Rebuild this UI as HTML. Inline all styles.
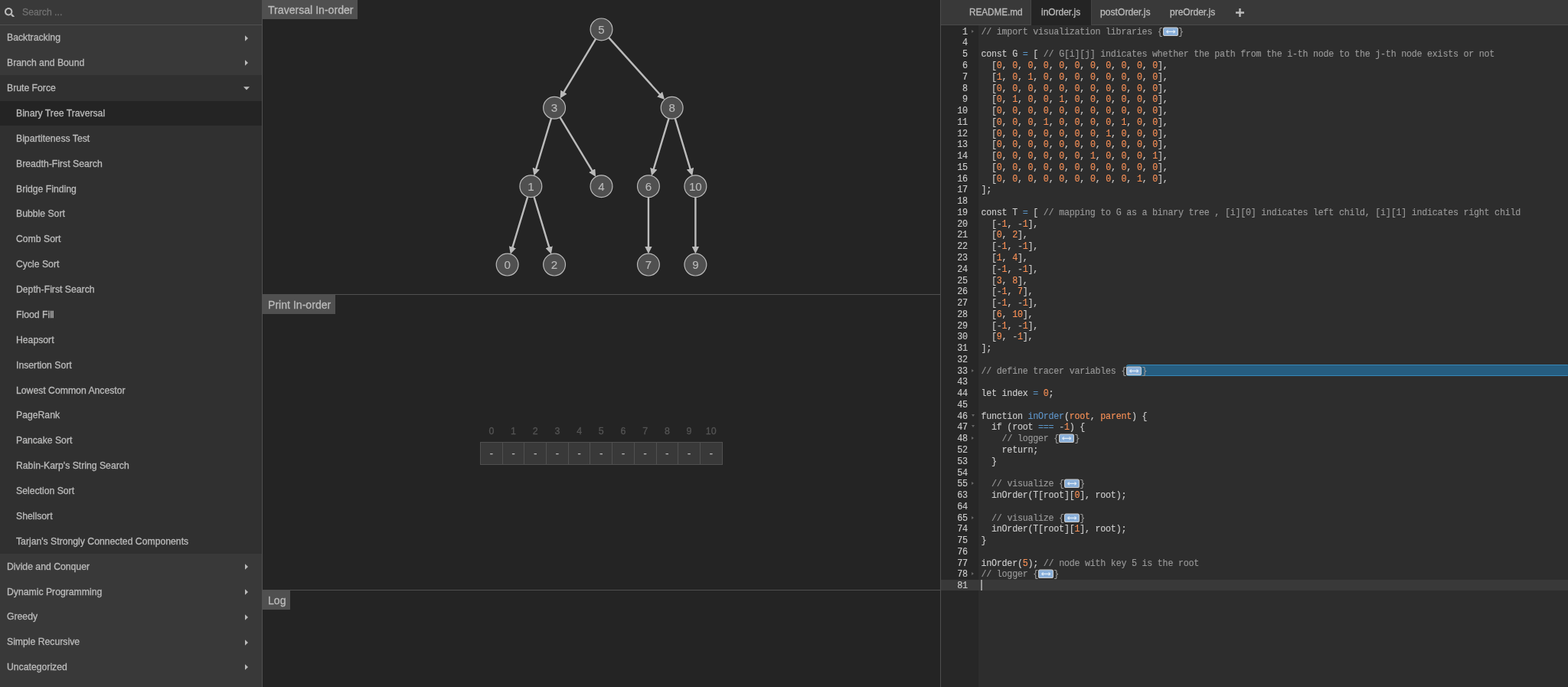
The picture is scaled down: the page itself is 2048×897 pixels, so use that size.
<!DOCTYPE html>
<html><head><meta charset="utf-8"><title>Algorithm Visualizer</title>
<style>
*{box-sizing:border-box;margin:0;padding:0}
html,body{width:2048px;height:897px;overflow:hidden;background:#242424;color:#bbb;font-family:"Liberation Sans",sans-serif;-webkit-text-stroke:0.3px}
#side{will-change:transform;position:absolute;left:0;top:0;width:343px;height:897px;background:#393939;border-right:1px solid #505050;font-size:13px;}
.search{height:32.88px;border-bottom:1px solid #505050;position:relative}
.sicon{position:absolute;left:6.3px;top:9.7px;width:12.8px;height:12.8px;fill:#bbb}
.ph{position:absolute;left:28.5px;top:0px;line-height:32px;color:#707070;font-size:13px;display:inline-block;transform:scaleX(.94);transform-origin:0 50%}
.row{height:32.88px;line-height:32.88px;position:relative;white-space:nowrap}
.row span{position:absolute;left:9px;top:0.45px;display:inline-block;transform:scaleX(.94);transform-origin:0 50%}
.row.sub span{left:21.3px}
.row.open,.row.sub{background:#303030}
.row.sub.sel{background:#242424}
.row.open{box-shadow:0 -1px 0 #303030}
.caret{position:absolute;left:316.6px;top:11.7px;width:10px;height:10px;fill:#bbb}
#mid{will-change:transform;position:absolute;left:343px;top:0;width:885px;height:897px;background:#242424}
.panel{position:absolute;left:0;width:885px;border-top:1px solid #505050}
.title{position:absolute;left:0;top:0;height:25.3px;line-height:25.3px;background:#505050;color:#bbb;font-size:15px;white-space:nowrap}
.title span{position:absolute;left:6.7px;top:0;display:inline-block;transform:scaleX(.94);transform-origin:0 50%}
svg.graph{position:absolute;left:0;top:0}
.edge{stroke:#bbb;stroke-width:2;fill:none}
.nc{fill:#505050;stroke:#bbb;stroke-width:1}
.nt{fill:#bbb;stroke:#bbb;stroke-width:.08;font-size:12.6px;text-anchor:middle;font-family:"Liberation Sans",sans-serif}
table.arr{position:absolute;border-collapse:collapse;left:284px;top:164.2px}
table.arr td{width:28.7px;height:28.5px;text-align:center;font-size:12.4px;padding:0}
td.ix{color:#545454;padding-top:1.2px}
td.ce{background:#393939;border:1px solid #505050;color:#bbb}
#code{will-change:transform;position:absolute;left:1228px;top:0;width:820px;height:897px;background:#2d2d2d;border-left:1px solid #4e4e4e}
.tabs{position:absolute;left:0;top:0;width:819px;height:33px;background:#393939;border-bottom:1px solid #4a4a4a;font-size:12.4px}
.tab{position:absolute;top:0;height:32px;border-right:1px solid #444}
.tab span{position:absolute;top:0;line-height:33.4px;color:#bbb;white-space:nowrap;display:inline-block;transform-origin:0 50%}
.tab.sel{background:#242424;height:33px;border-left:1px solid #444}
.plus{position:absolute;left:385.4px;top:10.5px;width:11px;height:11px;fill:#bbb}
.gutter{position:absolute;left:0;top:33px;width:49px;height:864px;background:#272727;color:#ccc}
.codearea{position:absolute;left:49px;top:33px;width:770px;height:864px;background:#2d2d2d;color:#ccc}
.gl,.cl{height:14.776px;line-height:14.776px;font-family:"Liberation Mono","DejaVu Sans Mono",monospace;font-size:11.7px;letter-spacing:-0.24px;white-space:pre;position:relative;-webkit-text-stroke:0.12px}
.gl .ln{position:absolute;right:14.2px;top:1.7px;transform:scaleY(1.06);transform-origin:0 72%}
.gl.act,.cl.act{background:#393939}
.cl .tx{position:absolute;left:3.5px;top:1.7px;transform:scaleY(1.06);transform-origin:0 72%}
.fw{position:absolute;left:40px;top:5.6px;width:0;height:0;border-style:solid}
.fw.r{border-width:2.5px 0 2.5px 3.5px;border-color:transparent transparent transparent #666}
.fw.d{border-width:3.5px 2.5px 0 2.5px;border-color:#666 transparent transparent transparent;top:5.5px;left:39.5px}
.c{color:#999} .n{color:#f99157} .op{color:#5a96c8} .fn{color:#5f94c8} .mi{color:#b0b0b0}
.fold{display:inline-block;width:20.3px;height:11.2px;vertical-align:-1.9px;background:#8ab0da;border:1px solid #ccc;border-radius:2.5px;position:relative;letter-spacing:0}
.fold svg{position:absolute;left:0;top:0;width:100%;height:100%;stroke:#dfeaf5;stroke-width:1.2;fill:none}
.selbg{position:absolute;left:192.5px;right:-2px;top:-0.4px;height:15.2px;background:#265d80;border:1px solid #3788b8;border-radius:2.5px}
.pm{position:absolute;left:593.5px;top:33px;width:1px;height:864px;background:#343434}
.cursor{position:absolute;left:3.4px;top:0;width:1.6px;height:14.776px;background:#999}
</style></head><body>
<div id="side">
<div class="search"><svg class="sicon" viewBox="0 0 512 512"><path d="M505 442.7L405.3 343c-4.5-4.5-10.6-7-17-7H372c27.600-35.300 44-79.700 44-128C416 93.100 322.900 0 208 0S0 93.100 0 208s93.100 208 208 208c48.300 0 92.700-16.400 128-44v16.300c0 6.400 2.500 12.500 7 17l99.700 99.700c9.400 9.400 24.600 9.400 33.900 0l28.300-28.300c9.400-9.400 9.400-24.600.1-34zM208 336c-70.700 0-128-57.200-128-128 0-70.700 57.200-128 128-128 70.700 0 128 57.200 128 128 0 70.700-57.200 128-128 128z"/></svg><span class="ph">Search ...</span></div>
<div class="row cat"><span>Backtracking</span><svg class="caret" viewBox="0 0 10 10"><path d="M3 1.3 L7 5 L3 8.7 Z"/></svg></div>
<div class="row cat"><span>Branch and Bound</span><svg class="caret" viewBox="0 0 10 10"><path d="M3 1.3 L7 5 L3 8.7 Z"/></svg></div>
<div class="row cat open"><span>Brute Force</span><svg class="caret" viewBox="0 0 10 10"><path d="M1 3.2 L9 3.2 L5 7.4 Z"/></svg></div>
<div class="row sub sel"><span>Binary Tree Traversal</span></div>
<div class="row sub"><span>Bipartiteness Test</span></div>
<div class="row sub"><span>Breadth-First Search</span></div>
<div class="row sub"><span>Bridge Finding</span></div>
<div class="row sub"><span>Bubble Sort</span></div>
<div class="row sub"><span>Comb Sort</span></div>
<div class="row sub"><span>Cycle Sort</span></div>
<div class="row sub"><span>Depth-First Search</span></div>
<div class="row sub"><span>Flood Fill</span></div>
<div class="row sub"><span>Heapsort</span></div>
<div class="row sub"><span>Insertion Sort</span></div>
<div class="row sub"><span>Lowest Common Ancestor</span></div>
<div class="row sub"><span>PageRank</span></div>
<div class="row sub"><span>Pancake Sort</span></div>
<div class="row sub"><span>Rabin-Karp&#x27;s String Search</span></div>
<div class="row sub"><span>Selection Sort</span></div>
<div class="row sub"><span>Shellsort</span></div>
<div class="row sub"><span>Tarjan&#x27;s Strongly Connected Components</span></div>
<div class="row cat"><span>Divide and Conquer</span><svg class="caret" viewBox="0 0 10 10"><path d="M3 1.3 L7 5 L3 8.7 Z"/></svg></div>
<div class="row cat"><span>Dynamic Programming</span><svg class="caret" viewBox="0 0 10 10"><path d="M3 1.3 L7 5 L3 8.7 Z"/></svg></div>
<div class="row cat"><span>Greedy</span><svg class="caret" viewBox="0 0 10 10"><path d="M3 1.3 L7 5 L3 8.7 Z"/></svg></div>
<div class="row cat"><span>Simple Recursive</span><svg class="caret" viewBox="0 0 10 10"><path d="M3 1.3 L7 5 L3 8.7 Z"/></svg></div>
<div class="row cat"><span>Uncategorized</span><svg class="caret" viewBox="0 0 10 10"><path d="M3 1.3 L7 5 L3 8.7 Z"/></svg></div>
</div>
<div id="mid">
 <div class="panel" style="top:-1px;height:385px">
  <svg class="graph" width="885" height="384" viewBox="0 0 885 384">
   <defs><marker id="arr" markerWidth="4" markerHeight="4" refX="2" refY="2" orient="auto"><path d="M0,0 L0,4 L4,2 Z" fill="#bbb"/></marker></defs>
   <g transform="translate(442.5,192) scale(1.2)">
<path class="edge" d="M0.00,-128.00 L-42.97,-56.39" marker-end="url(#arr)"/>
<path class="edge" d="M0.00,-128.00 L66.10,-54.56" marker-end="url(#arr)"/>
<path class="edge" d="M-51.20,-42.67 L-72.20,27.34" marker-end="url(#arr)"/>
<path class="edge" d="M-51.20,-42.67 L-8.23,28.95" marker-end="url(#arr)"/>
<path class="edge" d="M76.80,-42.67 L55.80,27.34" marker-end="url(#arr)"/>
<path class="edge" d="M76.80,-42.67 L97.80,27.34" marker-end="url(#arr)"/>
<path class="edge" d="M-76.80,42.67 L-97.80,112.67" marker-end="url(#arr)"/>
<path class="edge" d="M-76.80,42.67 L-55.80,112.67" marker-end="url(#arr)"/>
<path class="edge" d="M51.20,42.67 L51.20,112.00" marker-end="url(#arr)"/>
<path class="edge" d="M102.40,42.67 L102.40,112.00" marker-end="url(#arr)"/>
<circle class="nc" cx="0.00" cy="-128.00" r="12"/><text class="nt" x="0.00" y="-128.00" dy="4.5">5</text>
<circle class="nc" cx="-51.20" cy="-42.67" r="12"/><text class="nt" x="-51.20" y="-42.67" dy="4.5">3</text>
<circle class="nc" cx="76.80" cy="-42.67" r="12"/><text class="nt" x="76.80" y="-42.67" dy="4.5">8</text>
<circle class="nc" cx="-76.80" cy="42.67" r="12"/><text class="nt" x="-76.80" y="42.67" dy="4.5">1</text>
<circle class="nc" cx="0.00" cy="42.67" r="12"/><text class="nt" x="0.00" y="42.67" dy="4.5">4</text>
<circle class="nc" cx="51.20" cy="42.67" r="12"/><text class="nt" x="51.20" y="42.67" dy="4.5">6</text>
<circle class="nc" cx="102.40" cy="42.67" r="12"/><text class="nt" x="102.40" y="42.67" dy="4.5">10</text>
<circle class="nc" cx="-102.40" cy="128.00" r="12"/><text class="nt" x="-102.40" y="128.00" dy="4.5">0</text>
<circle class="nc" cx="-51.20" cy="128.00" r="12"/><text class="nt" x="-51.20" y="128.00" dy="4.5">2</text>
<circle class="nc" cx="51.20" cy="128.00" r="12"/><text class="nt" x="51.20" y="128.00" dy="4.5">7</text>
<circle class="nc" cx="102.40" cy="128.00" r="12"/><text class="nt" x="102.40" y="128.00" dy="4.5">9</text>
   </g>
  </svg>
  <div class="title" style="width:124px"><span>Traversal In-order</span></div>
 </div>
 <div class="panel" style="top:384px;height:386px">
  <div class="title" style="width:95px"><span>Print In-order</span></div>
  <table class="arr"><tr><td class="ix">0</td><td class="ix">1</td><td class="ix">2</td><td class="ix">3</td><td class="ix">4</td><td class="ix">5</td><td class="ix">6</td><td class="ix">7</td><td class="ix">8</td><td class="ix">9</td><td class="ix">10</td></tr><tr><td class="ce">-</td><td class="ce">-</td><td class="ce">-</td><td class="ce">-</td><td class="ce">-</td><td class="ce">-</td><td class="ce">-</td><td class="ce">-</td><td class="ce">-</td><td class="ce">-</td><td class="ce">-</td></tr></table>
 </div>
 <div class="panel" style="top:770px;height:127px">
  <div class="title" style="width:36px"><span>Log</span></div>
 </div>
</div>
<div id="code">
 <div class="tabs">
  <div class="tab" style="left:0;width:118px;border-right:none"><span style="left:37px;transform:scaleX(.942)">README.md</span></div>
  <div class="tab sel" style="left:117.3px;width:79.4px"><span style="left:12.5px;transform:scaleX(.964)">inOrder.js</span></div>
  <div class="tab" style="left:196.1px;width:90px;border:none"><span style="left:12.3px;transform:scaleX(.981)">postOrder.js</span></div>
  <div class="tab" style="left:287px;width:84px;border:none"><span style="left:12.3px;transform:scaleX(.965)">preOrder.js</span></div>
  <svg class="plus" viewBox="0 0 11 11"><path d="M4.3 0 h2.4 v4.3 h4.3 v2.4 h-4.3 v4.3 h-2.4 v-4.3 h-4.3 v-2.4 h4.3 z"/></svg>
 </div>
 <div class="pm"></div>
 <div class="gutter">
<div class="gl"><span class="ln">1</span><i class="fw r"></i></div>
<div class="gl"><span class="ln">4</span></div>
<div class="gl"><span class="ln">5</span></div>
<div class="gl"><span class="ln">6</span></div>
<div class="gl"><span class="ln">7</span></div>
<div class="gl"><span class="ln">8</span></div>
<div class="gl"><span class="ln">9</span></div>
<div class="gl"><span class="ln">10</span></div>
<div class="gl"><span class="ln">11</span></div>
<div class="gl"><span class="ln">12</span></div>
<div class="gl"><span class="ln">13</span></div>
<div class="gl"><span class="ln">14</span></div>
<div class="gl"><span class="ln">15</span></div>
<div class="gl"><span class="ln">16</span></div>
<div class="gl"><span class="ln">17</span></div>
<div class="gl"><span class="ln">18</span></div>
<div class="gl"><span class="ln">19</span></div>
<div class="gl"><span class="ln">20</span></div>
<div class="gl"><span class="ln">21</span></div>
<div class="gl"><span class="ln">22</span></div>
<div class="gl"><span class="ln">23</span></div>
<div class="gl"><span class="ln">24</span></div>
<div class="gl"><span class="ln">25</span></div>
<div class="gl"><span class="ln">26</span></div>
<div class="gl"><span class="ln">27</span></div>
<div class="gl"><span class="ln">28</span></div>
<div class="gl"><span class="ln">29</span></div>
<div class="gl"><span class="ln">30</span></div>
<div class="gl"><span class="ln">31</span></div>
<div class="gl"><span class="ln">32</span></div>
<div class="gl"><span class="ln">33</span><i class="fw r"></i></div>
<div class="gl"><span class="ln">43</span></div>
<div class="gl"><span class="ln">44</span></div>
<div class="gl"><span class="ln">45</span></div>
<div class="gl"><span class="ln">46</span><i class="fw d"></i></div>
<div class="gl"><span class="ln">47</span><i class="fw d"></i></div>
<div class="gl"><span class="ln">48</span><i class="fw r"></i></div>
<div class="gl"><span class="ln">52</span></div>
<div class="gl"><span class="ln">53</span></div>
<div class="gl"><span class="ln">54</span></div>
<div class="gl"><span class="ln">55</span><i class="fw r"></i></div>
<div class="gl"><span class="ln">63</span></div>
<div class="gl"><span class="ln">64</span></div>
<div class="gl"><span class="ln">65</span><i class="fw r"></i></div>
<div class="gl"><span class="ln">74</span></div>
<div class="gl"><span class="ln">75</span></div>
<div class="gl"><span class="ln">76</span></div>
<div class="gl"><span class="ln">77</span></div>
<div class="gl"><span class="ln">78</span><i class="fw r"></i></div>
<div class="gl act"><span class="ln">81</span></div>
 </div>
 <div class="codearea">
<div class="cl"><span class="tx"><span class="c">// import visualization libraries {</span><span class="fold"><svg viewBox="0 0 20 11"><path d="M3 5.5 H17 M3 5.5 l3 -2.2 M3 5.5 l3 2.2 M17 5.5 l-3 -2.2 M17 5.5 l-3 2.2"/></svg></span><span class="c">}</span></span></div>
<div class="cl"><span class="tx"></span></div>
<div class="cl"><span class="tx">const G <span class="op">=</span> [ <span class="c">// G[i][j] indicates whether the path from the i-th node to the j-th node exists or not</span></span></div>
<div class="cl"><span class="tx">  [<span class="n">0</span>, <span class="n">0</span>, <span class="n">0</span>, <span class="n">0</span>, <span class="n">0</span>, <span class="n">0</span>, <span class="n">0</span>, <span class="n">0</span>, <span class="n">0</span>, <span class="n">0</span>, <span class="n">0</span>],</span></div>
<div class="cl"><span class="tx">  [<span class="n">1</span>, <span class="n">0</span>, <span class="n">1</span>, <span class="n">0</span>, <span class="n">0</span>, <span class="n">0</span>, <span class="n">0</span>, <span class="n">0</span>, <span class="n">0</span>, <span class="n">0</span>, <span class="n">0</span>],</span></div>
<div class="cl"><span class="tx">  [<span class="n">0</span>, <span class="n">0</span>, <span class="n">0</span>, <span class="n">0</span>, <span class="n">0</span>, <span class="n">0</span>, <span class="n">0</span>, <span class="n">0</span>, <span class="n">0</span>, <span class="n">0</span>, <span class="n">0</span>],</span></div>
<div class="cl"><span class="tx">  [<span class="n">0</span>, <span class="n">1</span>, <span class="n">0</span>, <span class="n">0</span>, <span class="n">1</span>, <span class="n">0</span>, <span class="n">0</span>, <span class="n">0</span>, <span class="n">0</span>, <span class="n">0</span>, <span class="n">0</span>],</span></div>
<div class="cl"><span class="tx">  [<span class="n">0</span>, <span class="n">0</span>, <span class="n">0</span>, <span class="n">0</span>, <span class="n">0</span>, <span class="n">0</span>, <span class="n">0</span>, <span class="n">0</span>, <span class="n">0</span>, <span class="n">0</span>, <span class="n">0</span>],</span></div>
<div class="cl"><span class="tx">  [<span class="n">0</span>, <span class="n">0</span>, <span class="n">0</span>, <span class="n">1</span>, <span class="n">0</span>, <span class="n">0</span>, <span class="n">0</span>, <span class="n">0</span>, <span class="n">1</span>, <span class="n">0</span>, <span class="n">0</span>],</span></div>
<div class="cl"><span class="tx">  [<span class="n">0</span>, <span class="n">0</span>, <span class="n">0</span>, <span class="n">0</span>, <span class="n">0</span>, <span class="n">0</span>, <span class="n">0</span>, <span class="n">1</span>, <span class="n">0</span>, <span class="n">0</span>, <span class="n">0</span>],</span></div>
<div class="cl"><span class="tx">  [<span class="n">0</span>, <span class="n">0</span>, <span class="n">0</span>, <span class="n">0</span>, <span class="n">0</span>, <span class="n">0</span>, <span class="n">0</span>, <span class="n">0</span>, <span class="n">0</span>, <span class="n">0</span>, <span class="n">0</span>],</span></div>
<div class="cl"><span class="tx">  [<span class="n">0</span>, <span class="n">0</span>, <span class="n">0</span>, <span class="n">0</span>, <span class="n">0</span>, <span class="n">0</span>, <span class="n">1</span>, <span class="n">0</span>, <span class="n">0</span>, <span class="n">0</span>, <span class="n">1</span>],</span></div>
<div class="cl"><span class="tx">  [<span class="n">0</span>, <span class="n">0</span>, <span class="n">0</span>, <span class="n">0</span>, <span class="n">0</span>, <span class="n">0</span>, <span class="n">0</span>, <span class="n">0</span>, <span class="n">0</span>, <span class="n">0</span>, <span class="n">0</span>],</span></div>
<div class="cl"><span class="tx">  [<span class="n">0</span>, <span class="n">0</span>, <span class="n">0</span>, <span class="n">0</span>, <span class="n">0</span>, <span class="n">0</span>, <span class="n">0</span>, <span class="n">0</span>, <span class="n">0</span>, <span class="n">1</span>, <span class="n">0</span>],</span></div>
<div class="cl"><span class="tx">];</span></div>
<div class="cl"><span class="tx"></span></div>
<div class="cl"><span class="tx">const T <span class="op">=</span> [ <span class="c">// mapping to G as a binary tree , [i][0] indicates left child, [i][1] indicates right child</span></span></div>
<div class="cl"><span class="tx">  [<span class="mi">-</span><span class="n">1</span>, <span class="mi">-</span><span class="n">1</span>],</span></div>
<div class="cl"><span class="tx">  [<span class="n">0</span>, <span class="n">2</span>],</span></div>
<div class="cl"><span class="tx">  [<span class="mi">-</span><span class="n">1</span>, <span class="mi">-</span><span class="n">1</span>],</span></div>
<div class="cl"><span class="tx">  [<span class="n">1</span>, <span class="n">4</span>],</span></div>
<div class="cl"><span class="tx">  [<span class="mi">-</span><span class="n">1</span>, <span class="mi">-</span><span class="n">1</span>],</span></div>
<div class="cl"><span class="tx">  [<span class="n">3</span>, <span class="n">8</span>],</span></div>
<div class="cl"><span class="tx">  [<span class="mi">-</span><span class="n">1</span>, <span class="n">7</span>],</span></div>
<div class="cl"><span class="tx">  [<span class="mi">-</span><span class="n">1</span>, <span class="mi">-</span><span class="n">1</span>],</span></div>
<div class="cl"><span class="tx">  [<span class="n">6</span>, <span class="n">10</span>],</span></div>
<div class="cl"><span class="tx">  [<span class="mi">-</span><span class="n">1</span>, <span class="mi">-</span><span class="n">1</span>],</span></div>
<div class="cl"><span class="tx">  [<span class="n">9</span>, <span class="mi">-</span><span class="n">1</span>],</span></div>
<div class="cl"><span class="tx">];</span></div>
<div class="cl"><span class="tx"></span></div>
<div class="cl"><span class="selbg"></span><span class="tx"><span class="c">// define tracer variables {</span><span class="fold"><svg viewBox="0 0 20 11"><path d="M3 5.5 H17 M3 5.5 l3 -2.2 M3 5.5 l3 2.2 M17 5.5 l-3 -2.2 M17 5.5 l-3 2.2"/></svg></span><span class="c">}</span></span></div>
<div class="cl"><span class="tx"></span></div>
<div class="cl"><span class="tx">let index <span class="op">=</span> <span class="n">0</span>;</span></div>
<div class="cl"><span class="tx"></span></div>
<div class="cl"><span class="tx">function <span class="fn">inOrder</span>(<span class="n">root</span>, <span class="n">parent</span>) {</span></div>
<div class="cl"><span class="tx">  if (root <span class="op">===</span> <span class="mi">-</span><span class="n">1</span>) {</span></div>
<div class="cl"><span class="tx">    <span class="c">// logger {</span><span class="fold"><svg viewBox="0 0 20 11"><path d="M3 5.5 H17 M3 5.5 l3 -2.2 M3 5.5 l3 2.2 M17 5.5 l-3 -2.2 M17 5.5 l-3 2.2"/></svg></span><span class="c">}</span></span></div>
<div class="cl"><span class="tx">    return;</span></div>
<div class="cl"><span class="tx">  }</span></div>
<div class="cl"><span class="tx"></span></div>
<div class="cl"><span class="tx">  <span class="c">// visualize {</span><span class="fold"><svg viewBox="0 0 20 11"><path d="M3 5.5 H17 M3 5.5 l3 -2.2 M3 5.5 l3 2.2 M17 5.5 l-3 -2.2 M17 5.5 l-3 2.2"/></svg></span><span class="c">}</span></span></div>
<div class="cl"><span class="tx">  inOrder(T[root][<span class="n">0</span>], root);</span></div>
<div class="cl"><span class="tx"></span></div>
<div class="cl"><span class="tx">  <span class="c">// visualize {</span><span class="fold"><svg viewBox="0 0 20 11"><path d="M3 5.5 H17 M3 5.5 l3 -2.2 M3 5.5 l3 2.2 M17 5.5 l-3 -2.2 M17 5.5 l-3 2.2"/></svg></span><span class="c">}</span></span></div>
<div class="cl"><span class="tx">  inOrder(T[root][<span class="n">1</span>], root);</span></div>
<div class="cl"><span class="tx">}</span></div>
<div class="cl"><span class="tx"></span></div>
<div class="cl"><span class="tx">inOrder(<span class="n">5</span>); <span class="c">// node with key 5 is the root</span></span></div>
<div class="cl"><span class="tx"><span class="c">// logger {</span><span class="fold"><svg viewBox="0 0 20 11"><path d="M3 5.5 H17 M3 5.5 l3 -2.2 M3 5.5 l3 2.2 M17 5.5 l-3 -2.2 M17 5.5 l-3 2.2"/></svg></span><span class="c">}</span></span></div>
<div class="cl act"><span class="cursor"></span><span class="tx"></span></div>
 </div>
</div>
</body></html>
